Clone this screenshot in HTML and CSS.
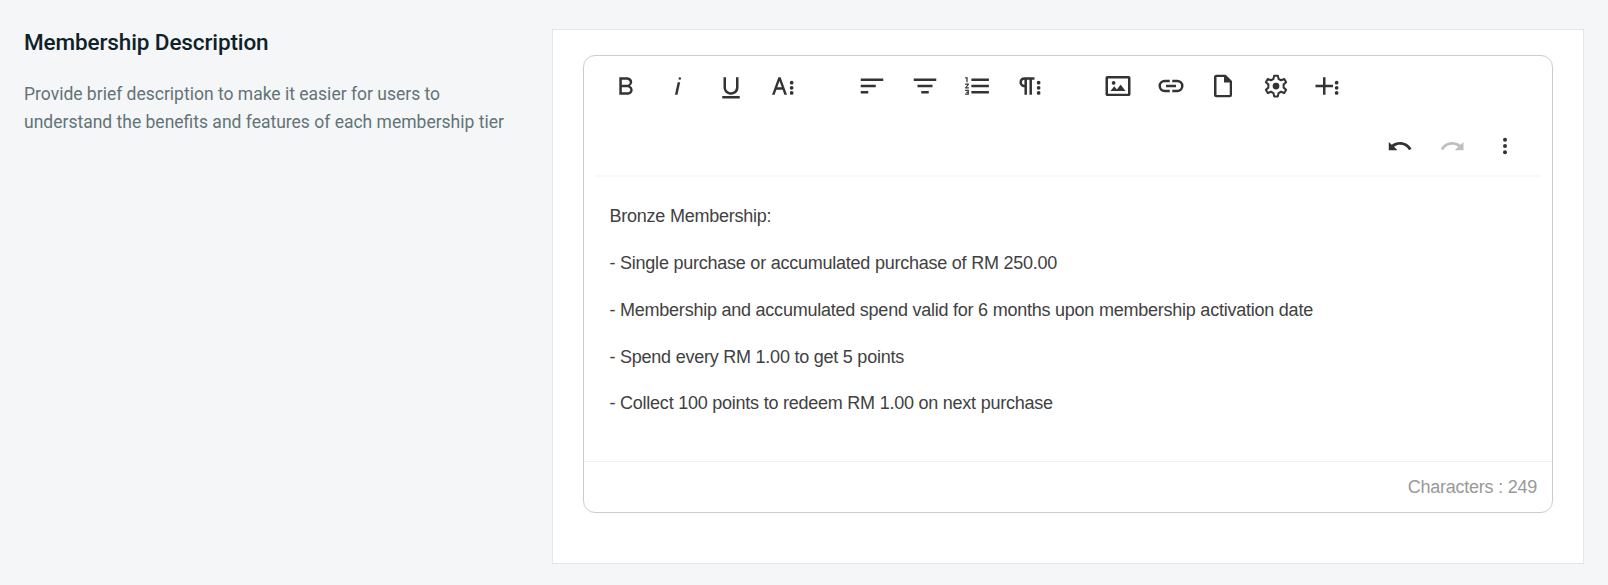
FILE: index.html
```
<!DOCTYPE html>
<html lang="en">
<head>
<meta charset="utf-8">
<title>Membership Description</title>
<link rel="stylesheet" href="styles.css">
</head>
<body>
<main class="section">
  <header class="intro">
    <h2 class="intro-title">Membership Description</h2>
    <p class="intro-text">Provide brief description to make it easier for users to<br>understand the benefits and features of each membership tier</p>
  </header>
  <section class="card">
    <div class="editor">
      <div class="toolbar">
        <div class="row">
          <div class="group">
            <button class="btn" aria-label="Bold"><svg viewBox="0 0 24 24"><path d="M15.25,11.8h0A3.68,3.68,0,0,0,17,9a3.93,3.93,0,0,0-3.86-4H6.65V19h7a3.74,3.74,0,0,0,3.7-3.78V15.1A3.64,3.64,0,0,0,15.25,11.8ZM8.65,7h4.2a2.09,2.09,0,0,1,2,1.3,2.09,2.09,0,0,1-1.37,2.61,2.23,2.23,0,0,1-.63.09H8.65Zm4.6,10H8.65V13h4.6a2.09,2.09,0,0,1,2,1.3,2.09,2.09,0,0,1-1.37,2.61A2.23,2.23,0,0,1,13.25,17Z"/></svg></button>
            <button class="btn" aria-label="Italic"><svg viewBox="0 0 24 24"><path d="M11.76,9h2l-2.2,10h-2Zm1.68-4a1,1,0,1,0,1,1,1,1,0,0,0-1-1Z"/></svg></button>
            <button class="btn" aria-label="Underline"><svg viewBox="0 0 24 24"><path d="M19,20v2H5V20Zm-3-6.785a4,4,0,0,1-5.74,3.4A3.75,3.75,0,0,1,8,13.085V5.005H6v8.21a6,6,0,0,0,8,5.44,5.851,5.851,0,0,0,4-5.65v-8H16Z"/></svg></button>
            <button class="btn" aria-label="More text"><svg viewBox="0 0 24 24"><path d="M13.1,19h2.1L10.1,5H8.3L3.2,19h2.1L6.7,15h5ZM7.4,13l1.8-5.1L11,13Z"/><circle cx="18.9" cy="9.3" r="1.5"/><circle cx="18.9" cy="13.4" r="1.5"/><circle cx="18.9" cy="17.5" r="1.5"/></svg></button>
          </div>
          <div class="group">
            <button class="btn" aria-label="Align left"><svg viewBox="0 0 24 24"><path d="M3,18h6V16H3v2ZM3,6V8H21V6Zm0,7H15V11H3v2Z"/></svg></button>
            <button class="btn" aria-label="Align center"><svg viewBox="0 0 24 24"><path d="M9,18h6V16H9v2ZM6,13H18V11H6v2ZM3,6V8H21V6Z"/></svg></button>
            <button class="btn" aria-label="Ordered list"><svg viewBox="0 0 24 24"><path d="M2.5,16h2v.5h-1v1h1V18h-2v1h3V15h-3Zm1-7h1V5h-2V6h1Zm-1,2H4.3L2.5,13.1V14h3V13H3.7l1.8-2.1V10h-3Zm5-5V8h14V6Zm0,12h14V16H7.5Zm0-5h14V11H7.5Z"/></svg></button>
            <button class="btn" aria-label="More paragraph"><svg viewBox="0 0 24 24"><path d="M7.682,5a4.11,4.11,0,0,0-4.07,3.18,4,4,0,0,0,3.11,4.725h0l.027.005a3.766,3.766,0,0,0,.82.09v6h2V7h2V19h2V7h2V5ZM5.532,9a2,2,0,0,1,2-2v4A2,2,0,0,1,5.532,9Z"/><circle cx="18.9" cy="9.3" r="1.5"/><circle cx="18.9" cy="13.4" r="1.5"/><circle cx="18.9" cy="17.5" r="1.5"/></svg></button>
          </div>
          <div class="group">
            <button class="btn" aria-label="Image"><svg viewBox="0 0 24 24"><path d="M14.2,11l3.8,5H6l3-3.9l2.1,2.7L14,11H14.2z M8.5,11c0.8,0,1.5-0.7,1.5-1.5S9.3,8,8.5,8S7,8.7,7,9.5C7,10.3,7.7,11,8.5,11z M22,4v0M22,5.5v13c0,.8-.7,1.500-1.500,1.500h-17c-.8,0-1.500-.7-1.500-1.500v-13c0-.8.7-1.500,1.500-1.500h17C21.300,4,22,4.700,22,5.500z M20,5.900H4v12.200h16z" fill-rule="evenodd"/></svg></button>
            <button class="btn" aria-label="Link"><svg viewBox="0 0 24 24"><path d="M11,17H7A5,5,0,0,1,7,7h4V9H7a3,3,0,0,0,0,6h4ZM17,7H13V9h4a3,3,0,0,1,0,6H13v2h4A5,5,0,0,0,17,7Zm-1,4H8v2h8Z"/></svg></button>
            <button class="btn" aria-label="File"><svg viewBox="0 0 24 24"><path fill-rule="evenodd" d="M6.800,3A2,2,0,0,0,4.800,5V19a2,2,0,0,0,2,2H17.200a2,2,0,0,0,2-2V8L14.200,3ZM6.800,4.800h6V9.200h4.600V19.200H6.800Z"/></svg></button>
            <button class="btn" aria-label="Settings"><svg viewBox="0 0 24 24"><path class="line" d="M10.500,3.700H13.500L14,6.300 16,7.400 18.600,6.400 20.100,9 18.100,10.700V13.300L20.100,15 18.600,17.600 16,16.600 14,17.700 13.500,20.300H10.500L10,17.700 8,16.600 5.400,17.600 3.900,15 5.900,13.300V10.700L3.900,9 5.400,6.400 8,7.400 10,6.300Z"/><circle cx="12" cy="12" r="2.700"/></svg></button>
            <button class="btn" aria-label="More rich"><svg viewBox="0 0 24 24"><path d="M10,5v6h6v2h-6v6H8v-6H2v-2h6V5Z"/><circle cx="18.9" cy="9.3" r="1.5"/><circle cx="18.9" cy="13.4" r="1.5"/><circle cx="18.9" cy="17.5" r="1.5"/></svg></button>
          </div>
        </div>
        <div class="row row-end">
          <button class="btn" aria-label="Undo"><svg viewBox="0 0 24 24"><path d="M3,8.7 5.4,11C10,7.6 17.5,8 21.2,14.2L19.3,15.3C16.5,10.8 11.2,9.7 7.2,12.6L10,15.4H3Z"/></svg></button>
          <button class="btn btn-off" aria-label="Redo"><svg viewBox="0 0 24 24"><path transform="translate(-.6 0)" d="M21,8.7 18.6,11C14,7.6 6.5,8 2.8,14.2L4.7,15.3C7.5,10.8 12.8,9.7 16.8,12.6L14,15.4H21Z"/></svg></button>
          <button class="btn" aria-label="More options"><svg viewBox="0 0 24 24"><circle cx="12" cy="7" r="1.6"/><circle cx="12" cy="12" r="1.6"/><circle cx="12" cy="17" r="1.6"/></svg></button>
        </div>
      </div>
      <div class="divider"></div>
      <div class="content">
        <p>Bronze Membership:</p>
        <p>- Single purchase or accumulated purchase of RM 250.00</p>
        <p>- Membership and accumulated spend valid for 6 months upon membership activation date</p>
        <p>- Spend every RM 1.00 to get 5 points</p>
        <p>- Collect 100 points to redeem RM 1.00 on next purchase</p>
      </div>
      <footer class="counter">Characters : 249</footer>
    </div>
  </section>
</main>
</body>
</html>
```
FILE: styles.css
```
* { box-sizing: border-box; }
body { margin: 0; background: #f4f6f8; height: 585px; overflow: hidden; }
.section { display: grid; grid-template-columns: 528px 1032px; padding: 29px 24px 0; }
.intro { font-family: Roboto, sans-serif; }
.intro-title { margin: 0; font-size: 22.5px; line-height: 27px; letter-spacing: -0.11px; font-weight: 500; color: #0f2228; white-space: nowrap; }
.intro-text { margin: 24px 0 0; font-size: 17.5px; line-height: 28px; color: #637377; white-space: nowrap; }
.card { height: 535px; padding: 25px 30px; background: #fff; border: 1px solid #e4e6e9; }
.editor { display: flex; flex-direction: column; height: 458px; border: 1px solid #ccc; border-radius: 12px; background: #fff; font-family: "Liberation Sans", Arial, sans-serif; letter-spacing: -0.235px; }
.toolbar { height: 119px; padding: 0 20.5px 0 15.5px; }
.row { display: flex; height: 60px; gap: 36.25px; }
.row-end { justify-content: flex-end; gap: 0; }
.group { display: flex; }
.btn { display: flex; align-items: center; justify-content: center; width: 52.5px; height: 60px; padding: 0; border: 0; background: none; color: #333; }
.btn-off { color: #c0c0c0; }
.btn svg { width: 30px; height: 30px; fill: currentColor; }
.btn .line { fill: none; stroke: currentColor; stroke-width: 1.6; stroke-linejoin: round; }
.divider { height: 2px; margin: 0 11px 0 12px; background: #f9f9f9; }
.content { height: 284px; padding: 25px 25.5px 0; font-size: 18px; line-height: 28px; color: #414141; white-space: nowrap; }
.content p { margin: 0 0 18.85px; }
.content p:last-child { margin-top: -0.5px; }
.counter { display: flex; justify-content: flex-end; height: 51px; padding: 11px 15px 0; border-top: 1px solid #f1f1f1; font-size: 18px; line-height: 28px; color: #999; }
```
